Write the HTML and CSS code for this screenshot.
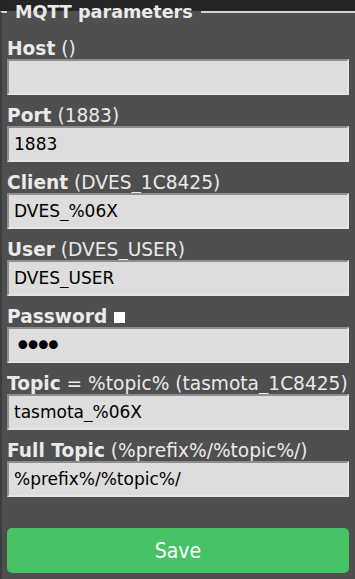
FILE: index.html
```html
<!DOCTYPE html>
<html lang="en">
<head>
<meta charset="utf-8">
<title>MQTT parameters</title>
<link rel="stylesheet" href="styles.css">
</head>
<body>
<form class="page">
  <fieldset class="panel">
    <legend class="panel-title">MQTT parameters</legend>
    <div class="field">
      <label class="label" for="mh"><b>Host</b> ()</label>
      <input class="input" id="mh" value="">
    </div>
    <div class="field">
      <label class="label" for="ml"><b>Port</b> (1883)</label>
      <input class="input" id="ml" value="1883">
    </div>
    <div class="field">
      <label class="label" for="mc"><b>Client</b> (DVES_1C8425)</label>
      <input class="input" id="mc" value="DVES_%06X">
    </div>
    <div class="field">
      <label class="label" for="mu"><b>User</b> (DVES_USER)</label>
      <input class="input" id="mu" value="DVES_USER">
    </div>
    <div class="field">
      <span class="label"><b>Password</b> <input class="toggle" type="checkbox" aria-label="Show password"></span>
      <input class="input input-pw" id="mp" type="password" value="abcd">
    </div>
    <div class="field">
      <label class="label" for="mt"><b>Topic</b> = %topic% (tasmota_1C8425)</label>
      <input class="input" id="mt" value="tasmota_%06X">
    </div>
    <div class="field">
      <label class="label" for="mf"><b>Full Topic</b> (%prefix%/%topic%/)</label>
      <input class="input" id="mf" value="%prefix%/%topic%/">
    </div>
    <button class="btn-save" type="button">Save</button>
  </fieldset>
</form>
</body>
</html>
```

FILE: styles.css
```css
html, body {
  margin: 0;
  height: 100%;
  overflow: hidden;
  background: #252525;
}

body {
  font-family: "DejaVu Sans", Verdana, sans-serif;
  font-size: 18.6px;
  color: #eaeaea;
}

.page {
  margin: 0;
}

.panel {
  margin: 2px 0 0 0;
  padding: 17px 6px 60px 5px;
  border: 0;
  border-top: 2px solid #d6d6d6;
  border-left: 2px solid #3d3d3d;
  background: #4f4f4f;
  min-width: 0;
}

.panel-title {
  padding: 0 8px;
  font-size: 17.6px;
  font-weight: bold;
  line-height: 20px;
  color: #eaeaea;
}

.field {
  display: flex;
  flex-direction: column;
  margin-bottom: 11px;
}

.label {
  display: block;
  line-height: 20px;
  white-space: nowrap;
}

.label b {
  font-weight: bold;
}

.input {
  box-sizing: border-box;
  width: 100%;
  height: 36px;
  margin: 0;
  padding: 0 5px;
  border-style: solid;
  border-width: 2px;
  border-color: #8e8e8e #e4e4e4 #e4e4e4 #8e8e8e;
  background: #dddddd;
  color: #000;
  font-family: "DejaVu Sans", Verdana, sans-serif;
  font-size: 17px;
  outline: none;
}

.input-pw {
  font-size: 30px;
  letter-spacing: -7.5px;
}

.toggle {
  appearance: none;
  -webkit-appearance: none;
  display: inline-block;
  width: 11px;
  height: 11px;
  margin: 0 0 0 1px;
  padding: 0;
  border: 0;
  background: #fff;
  vertical-align: baseline;
}

.btn-save {
  display: block;
  box-sizing: border-box;
  width: 100%;
  height: 45px;
  margin-top: 31px;
  border: 0;
  border-radius: 5px;
  background: #47c266;
  color: #fff;
  font-family: "DejaVu Sans Condensed", "DejaVu Sans", sans-serif;
  font-stretch: condensed;
  font-size: 21px;
}
```
